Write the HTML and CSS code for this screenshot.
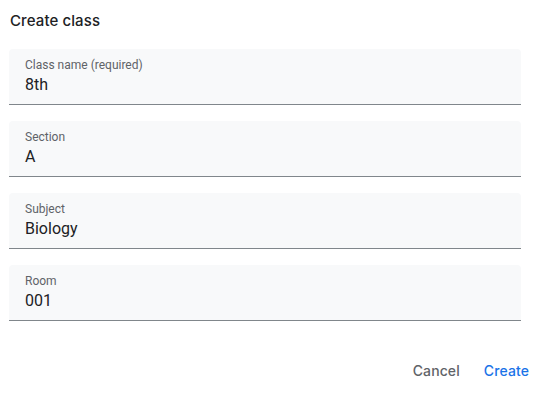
FILE: index.html
```html
<!DOCTYPE html>
<html>
<head>
<meta charset="utf-8">
<link rel="stylesheet" href="styles.css">
</head>
<body>
<div class="dialog">
  <h1 class="title">Create class</h1>
  <div class="fields">
    <div class="field">
      <div class="label">Class name (required)</div>
      <div class="value">8th</div>
    </div>
    <div class="field">
      <div class="label">Section</div>
      <div class="value">A</div>
    </div>
    <div class="field">
      <div class="label">Subject</div>
      <div class="value">Biology</div>
    </div>
    <div class="field">
      <div class="label">Room</div>
      <div class="value">001</div>
    </div>
  </div>
  <div class="actions">
    <button class="btn cancel">Cancel</button>
    <button class="btn create">Create</button>
  </div>
</div>
</body>
</html>
```
FILE: styles.css
```css
html, body {
  margin: 0;
  padding: 0;
  background: #ffffff;
}
.dialog {
  width: 537px;
  height: 394px;
  box-sizing: border-box;
  padding: 0 8px 0 9px;
  font-family: Roboto, "Noto Sans", Arial, sans-serif;
}
.title {
  margin: 0;
  padding: 11px 0 0 1px;
  height: 49px;
  box-sizing: border-box;
  font-family: Inter, "Open Sans", Roboto, sans-serif;
  font-weight: 500;
  font-size: 15px;
  line-height: 20px;
  color: #202124;
  letter-spacing: 0.1px;
}
.fields {
  display: flex;
  flex-direction: column;
  gap: 16px;
  width: 512px;
}
.field {
  background: #f8f9fa;
  border-radius: 4px 4px 0 0;
  border-bottom: 1px solid #80868b;
  padding: 8px 16px 6px 16px;
  box-sizing: border-box;
  height: 56px;
}
.label {
  font-size: 12px;
  line-height: 16px;
  color: #5f6368;
}
.value {
  font-size: 16px;
  line-height: 24px;
  color: #202124;
}
.actions {
  display: flex;
  justify-content: flex-end;
  gap: 24px;
  margin-top: 40px;
}
.btn {
  background: none;
  border: none;
  padding: 0;
  font-family: Inter, "Open Sans", Roboto, sans-serif;
  font-weight: 500;
  font-size: 14px;
  line-height: 20px;
  letter-spacing: 0.1px;
}
.cancel { color: #5f6368; }
.create { color: #1a73e8; }
```
